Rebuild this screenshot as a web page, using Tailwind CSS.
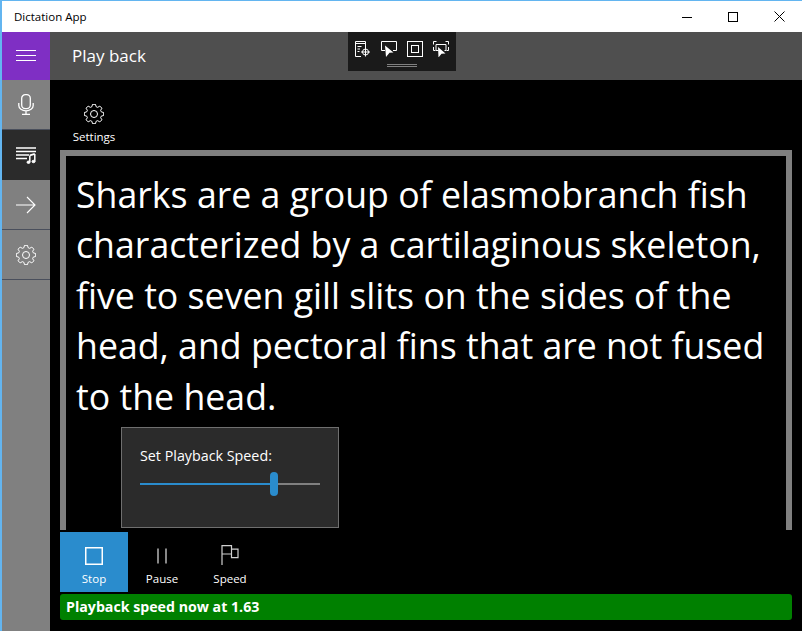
<!DOCTYPE html>
<html lang="en">
<head>
<meta charset="UTF-8">
<title>Dictation App</title>
<script src="https://cdn.jsdelivr.net/npm/@tailwindcss/browser@4"></script>
</head>
<body class="bg-black overflow-hidden font-['Open_Sans','Noto_Sans',sans-serif]">
<div class="relative w-[802px] h-[631px] flex flex-col border-t border-[#63b5f0] border-l-2 border-l-[#63b5f0]">
	<!-- title bar -->
	<div class="h-[31px] shrink-0 bg-white flex items-center justify-between">
		<span class="pl-3 text-[11.5px] text-black">Dictation App</span>
		<div class="flex items-center text-black">
			<div class="w-[46px] flex justify-center">
				<svg width="10" height="10" viewBox="0 0 10 10" stroke="currentColor" fill="none"><path d="M0 5.5h10"/></svg>
			</div>
			<div class="w-[46px] flex justify-center">
				<svg width="10" height="10" viewBox="0 0 10 10" stroke="currentColor" fill="none"><rect x=".5" y=".5" width="9" height="9"/></svg>
			</div>
			<div class="w-[46px] flex justify-center">
				<svg width="11" height="11" viewBox="0 0 11 11" stroke="currentColor" fill="none"><path d="M.5.5l10 10M10.5.5l-10 10"/></svg>
			</div>
		</div>
	</div>
	<div class="flex flex-1 min-h-0">
		<!-- sidebar -->
		<div class="w-[48px] shrink-0 bg-[#808080] flex flex-col text-white">
			<div class="h-[48px] bg-[#7f2fc4] flex items-center justify-center">
				<svg width="20" height="12" viewBox="0 0 20 12" stroke="currentColor" fill="none"><path d="M0 .5h20M0 5.5h20M0 10.5h20"/></svg>
			</div>
			<div class="h-[50px] border-b border-[#4a4f5c] flex items-center justify-center">
				<svg width="16" height="21" viewBox="0 0 16 21" stroke="currentColor" stroke-width="1.300" fill="none"><rect x="3.700" y=".7" width="8.600" height="14" rx="3.600"/><path d="M.8 9v2.500a7.200 5.400 0 0 0 14.400 0V9M8 16.800v3.400M4 20.400h8"/></svg>
			</div>
			<div class="h-[50px] bg-[#2b2b2b] flex items-center justify-center">
				<svg width="20" height="17" viewBox="0 0 20 17" stroke="currentColor" fill="none"><path d="M0 1h20M0 4.500h20M0 8h13M0 11.500h11" stroke-width="1.300"/><path d="M18.800 7v7.500M13.800 8.500v6.500" stroke-width="1.500"/><path d="M13.800 8.300l5-1.500" stroke-width="1.800"/><ellipse cx="12.500" cy="15.200" rx="1.500" ry="1.200" fill="currentColor"/><ellipse cx="17.500" cy="14.500" rx="1.500" ry="1.200" fill="currentColor"/></svg>
			</div>
			<div class="h-[50px] border-b border-[#4a4f5c] flex items-center justify-center">
				<svg width="20" height="18" viewBox="0 0 20 18" stroke="currentColor" stroke-width="1.100" fill="none"><path d="M0 9h19M11 1l8 8-8 8"/></svg>
			</div>
			<div class="h-[50px] border-b border-[#4a4f5c] flex items-center justify-center">
				<svg width="20" height="20" viewBox="0 0 20 20" stroke="currentColor" fill="none"><path d="M7.900 2.700L8.500 .3H11.500L12.100 2.700L13.680 3.350L15.800 2.080L17.920 4.200L16.650 6.320L17.300 7.900L19.700 8.500V11.500L17.300 12.100L16.650 13.680L17.920 15.800L15.800 17.920L13.680 16.650L12.100 17.300L11.500 19.700H8.500L7.900 17.300L6.320 16.650L4.200 17.920L2.080 15.800L3.350 13.680L2.700 12.100L.3 11.500V8.500L2.700 7.900L3.350 6.320L2.080 4.200L4.200 2.080L6.320 3.350Z"/><circle cx="10" cy="10" r="3.500"/></svg>
			</div>
		</div>
		<div class="flex-1 flex flex-col min-w-0">
			<!-- header -->
			<div class="h-[48px] shrink-0 bg-[#4f4f4f] flex items-center pl-[22px]">
				<span class="text-[17px] text-white">Play back</span>
			</div>
			<!-- settings command -->
			<div class="h-[70px] shrink-0 pl-[10px] flex items-start text-white">
				<div class="w-[68px] mt-[24px] flex flex-col items-center">
					<svg width="20" height="20" viewBox="0 0 20 20" stroke="currentColor" fill="none"><path d="M7.900 2.700L8.500 .3H11.500L12.100 2.700L13.680 3.350L15.800 2.080L17.920 4.200L16.650 6.320L17.300 7.900L19.700 8.500V11.500L17.300 12.100L16.650 13.680L17.920 15.800L15.800 17.920L13.680 16.650L12.100 17.300L11.500 19.700H8.500L7.900 17.300L6.320 16.650L4.200 17.920L2.080 15.800L3.350 13.680L2.700 12.100L.3 11.500V8.500L2.700 7.900L3.350 6.320L2.080 4.200L4.200 2.080L6.320 3.350Z"/><circle cx="10" cy="10" r="3.500"/></svg>
					<span class="text-[11.5px] leading-4 mt-[5px]">Settings</span>
				</div>
			</div>
			<!-- transcript -->
			<div class="ml-[10px] w-[732px] h-[380px] shrink-0 border-[6px] border-b-0 border-[#808080] px-[10px] pt-[13px]">
				<p class="text-[35.7px] leading-[50.4px] text-white">Sharks are a group of elasmobranch fish characterized by a cartilaginous skeleton, five to seven gill slits on the sides of the head, and pectoral fins that are not fused to the head.</p>
			</div>
			<!-- command bar -->
			<div class="ml-[10px] mt-[2px] h-[60px] shrink-0 flex text-white">
				<div class="w-[68px] bg-[#2a8ccd] flex flex-col items-center pt-[15px]">
					<svg width="18" height="18" viewBox="0 0 18 18" stroke="currentColor" stroke-width="1.500" fill="none"><rect x=".75" y=".75" width="16.500" height="16.500"/></svg>
					<span class="text-[11.5px] leading-4 mt-[6px]">Stop</span>
				</div>
				<div class="w-[68px] flex flex-col items-center pt-[15px]">
					<svg width="18" height="18" viewBox="0 0 18 18" stroke="#d0d0d0" stroke-width="1.300" fill="none"><path d="M5 1.500v15M13 1.500v15"/></svg>
					<span class="text-[11.5px] leading-4 mt-[6px]">Pause</span>
				</div>
				<div class="w-[68px] flex flex-col items-center pt-[13px]">
					<svg width="18" height="20" viewBox="0 0 18 20" stroke="#d0d0d0" stroke-width="1.200" fill="none"><path d="M1 20V.6h9.500v3.500H17v8.500h-6.500V9H1M10.500 4.100V9"/></svg>
					<span class="text-[11.5px] leading-4 mt-[6px]">Speed</span>
				</div>
			</div>
			<!-- status -->
			<div class="ml-[10px] mt-[2px] w-[732px] h-[26px] shrink-0 bg-[#008000] rounded-[3px] flex items-center pl-[6px]">
				<span class="text-[14.2px] font-bold text-white">Playback speed now at 1.63</span>
			</div>
		</div>
	</div>
	<!-- debug toolbar overlay -->
	<div class="absolute left-[346px] top-[31px] w-[108px] h-[39px] bg-[#1a1a1a] text-white flex flex-col items-center pt-[9px]">
		<div class="flex gap-[10px] h-[17px]">
			<svg width="16" height="16" viewBox="0 0 16 16" stroke="currentColor" fill="none"><path d="M6 15.500H.5V.5h10v7M.5 2.500h10M2.500 5.500h4M2.500 8h2.500M2.500 10.500h2"/><circle cx="10.500" cy="11" r="3"/><path d="M10.500 6.500v9M6 11h9"/></svg>
			<svg width="16" height="16" viewBox="0 0 16 16" stroke="currentColor" fill="none"><path d="M4 9.500H.5V.5h15v9H12"/><path d="M4 4.500L12.500 11.500L8.500 11.800L5 16z" fill="currentColor" stroke="none"/></svg>
			<svg width="16" height="16" viewBox="0 0 16 16" stroke="currentColor" fill="none"><rect x=".5" y=".5" width="15" height="15"/><rect x="4.500" y="4.500" width="7" height="7"/></svg>
			<svg width="16" height="16" viewBox="0 0 16 16" stroke="currentColor" fill="none"><path d="M.5 3.500v-3h3M12.500.5h3v3M.5 6v3.500h2M13.500 9.500h2V6M3 3.500h10v6h-1.500M5.500 9.500H3v-6"/><path d="M5 6L12.500 12.500L8.500 12.800L5.500 16.500z" fill="currentColor" stroke="none"/></svg>
		</div>
		<div class="w-[30px] mt-[6px] h-[3px] border-y border-[#808080]"></div>
	</div>
	<!-- speed flyout -->
	<div class="absolute left-[119px] top-[426px] w-[218px] h-[101px] bg-[#2b2b2b] border border-[#6f6f6f] px-[18px] pt-[18px] text-white">
		<p class="text-[14.3px] leading-5">Set Playback Speed:</p>
		<div class="relative mt-[6px] h-[24px] flex items-center">
			<div class="w-[130px] h-[2px] bg-[#2a8ccd]"></div>
			<div class="w-[8px] h-[24px] rounded-[4px] bg-[#2a8ccd]"></div>
			<div class="flex-1 h-[2px] bg-[#808080]"></div>
		</div>
	</div>
</div>
</body>
</html>
